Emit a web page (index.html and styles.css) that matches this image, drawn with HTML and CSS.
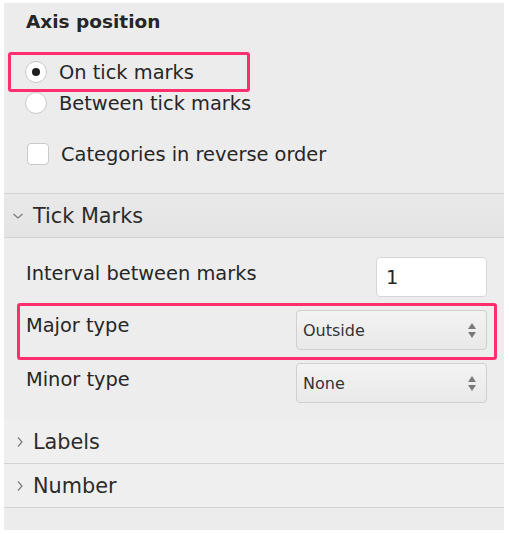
FILE: index.html
```html
<!DOCTYPE html>
<html lang="en">
<head>
    <meta charset="UTF-8">
    <meta name="viewport" content="width=device-width, initial-scale=1.0">
    <title>Format Axis</title>
    <link rel="stylesheet" href="styles.css">
</head>
<body>
    <div class="panel">
        <div class="section">
            <div class="heading">Axis position</div>
            <div class="highlight hl-radio">
                <label class="option"><span class="radio checked"></span>On tick marks</label>
            </div>
            <label class="option option-second"><span class="radio"></span>Between tick marks</label>
            <label class="option option-check"><span class="checkbox"></span>Categories in reverse order</label>
        </div>

        <div class="group-header">
            <svg class="chevron" width="12" height="12" viewBox="0 0 12 12"><path d="M1.5 4 L6 8 L10.5 4" fill="none" stroke="#7a7a7a" stroke-width="1.2"/></svg>
            Tick Marks
        </div>
        <div class="section tick-section">
            <div class="row">
                <span class="row-label">Interval between marks</span>
                <div class="number-input">1</div>
            </div>
            <div class="highlight hl-row">
                <div class="row">
                    <span class="row-label">Major type</span>
                    <div class="select">Outside<span class="arrows"></span></div>
                </div>
            </div>
            <div class="row">
                <span class="row-label">Minor type</span>
                <div class="select">None<span class="arrows"></span></div>
            </div>
        </div>

        <div class="group-header collapsed">
            <svg class="chevron" width="12" height="12" viewBox="0 0 12 12"><path d="M4 1.5 L8 6 L4 10.5" fill="none" stroke="#7a7a7a" stroke-width="1.2"/></svg>
            Labels
        </div>
        <div class="group-header collapsed">
            <svg class="chevron" width="12" height="12" viewBox="0 0 12 12"><path d="M4 1.5 L8 6 L4 10.5" fill="none" stroke="#7a7a7a" stroke-width="1.2"/></svg>
            Number
        </div>
        <div class="footer"></div>
    </div>
</body>
</html>
```

FILE: styles.css
```css
body {
    margin: 0;
    background: #ffffff;
    font-family: "DejaVu Sans", "Liberation Sans", sans-serif;
    color: #262626;
}
.panel {
    margin: 3px 5px 0 4px;
    background: #ececec;
    height: 527px;
    display: flex;
    flex-direction: column;
}
.section {
    display: flex;
    flex-direction: column;
}
.section:first-child {
    height: 190px;
}
.heading {
    font-weight: bold;
    font-size: 18.5px;
    padding: 8px 0 0 22px;
    height: 49px;
    box-sizing: border-box;
}
.highlight {
    border: 3px solid #ff2f6e;
    border-radius: 3px;
}
.hl-radio {
    margin: 0 0 0 4px;
    width: 242px;
    height: 40px;
    box-sizing: border-box;
    display: flex;
    align-items: center;
}
.option {
    display: flex;
    align-items: center;
    font-size: 19.4px;
    gap: 12px;
    height: 22px;
}
.hl-radio .option {
    padding-left: 14px;
}
.option-second {
    padding-left: 21px;
}
.option-check {
    padding-left: 23px;
    margin-top: 29px;
    gap: 12px;
}
.radio {
    width: 22px;
    height: 22px;
    border-radius: 50%;
    background: #ffffff;
    border: 1px solid #c9c9c9;
    box-sizing: border-box;
    display: flex;
    align-items: center;
    justify-content: center;
}
.radio.checked::after {
    content: "";
    width: 8px;
    height: 8px;
    border-radius: 50%;
    background: #1e1e1e;
}
.checkbox {
    width: 22px;
    height: 22px;
    border-radius: 4px;
    background: #ffffff;
    border: 1px solid #c9c9c9;
    box-sizing: border-box;
}
.group-header {
    display: flex;
    align-items: center;
    gap: 9px;
    height: 43px;
    padding-left: 8px;
    font-size: 20.8px;
    color: #2b2b2b;
    border-top: 1px solid #d3d3d3;
    border-bottom: 1px solid #d3d3d3;
    background: linear-gradient(#e9e9e9, #e4e4e4);
}
.group-header.collapsed {
    background: #efefef;
    border-top: none;
    padding-left: 10px;
    gap: 7px;
}
.tick-section {
    padding: 19px 0 17px 0;
    background: #ededed;
}
.row {
    display: flex;
    align-items: center;
    justify-content: space-between;
    font-size: 19.4px;
    padding: 0 17px 0 22px;
    height: 40px;
}
.row-label {
    padding-bottom: 8px;
}
.hl-row {
    margin: 6px 7px 3px 13px;
    height: 57px;
    box-sizing: border-box;
}
.hl-row .row {
    padding: 4px 7px 0 6px;
    align-items: flex-start;
    height: 51px;
    box-sizing: border-box;
}
.hl-row .row-label {
    padding: 4px 0 0 0;
}
.number-input {
    width: 111px;
    height: 40px;
    box-sizing: border-box;
    background: #ffffff;
    border: 1px solid #d6d6d6;
    border-radius: 4px;
    padding: 8px 9px;
    font-size: 19.4px;
}
.select {
    position: relative;
    width: 191px;
    height: 40px;
    box-sizing: border-box;
    border: 1px solid #d0d0d0;
    border-radius: 4px;
    background: linear-gradient(#f3f3f3, #e9e9e9);
    font-size: 16px;
    padding: 10px 6px;
    color: #333333;
}
.arrows {
    position: absolute;
    right: 10px;
    top: 12px;
    width: 0;
    height: 0;
    border-left: 4px solid transparent;
    border-right: 4px solid transparent;
    border-bottom: 6px solid #7a7a7a;
}
.arrows::after {
    content: "";
    position: absolute;
    left: -4px;
    top: 9px;
    border-left: 4px solid transparent;
    border-right: 4px solid transparent;
    border-top: 6px solid #7a7a7a;
}
.footer {
    flex: 1;
}
```
